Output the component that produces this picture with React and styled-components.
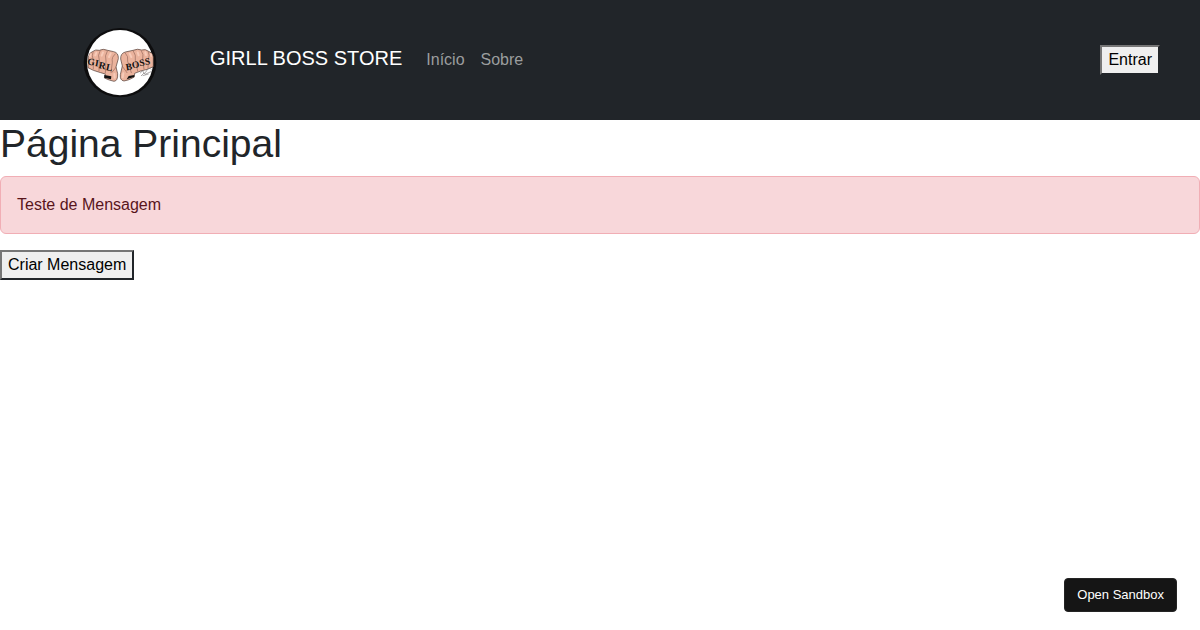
import React from 'react';
import styled, { createGlobalStyle } from 'styled-components';

const GlobalStyle = createGlobalStyle`
  *,
  *::before,
  *::after {
    box-sizing: border-box;
  }

  body {
    margin: 0;
    background: #fff;
    color: #212529;
    font-family: 'Helvetica Neue', Helvetica, 'Liberation Sans', Arial, sans-serif;
    font-size: 16px;
    line-height: 24px;
  }
`;

const StyledNavbar = styled.nav`
  min-height: 120px;
  display: flex;
  align-items: center;
  padding: 0 40px;
  background: #212529;
`;

const StyledLogoLink = styled.a`
  display: flex;
  padding: 5px 53px 0 43px;
`;

const StyledLogo = styled.svg`
  width: 74px;
  height: 70px;
`;

const StyledBrand = styled.a`
  margin-right: 16px;
  padding-bottom: 4px;
  color: #fff;
  font-size: 20px;
  line-height: 30px;
  text-decoration: none;
  white-space: nowrap;
`;

const StyledMenu = styled.ul`
  display: flex;
  flex-grow: 1;
  margin: 0;
  padding: 0;
  list-style: none;
`;

const StyledMenuLink = styled.a`
  display: block;
  padding: 8px;
  color: #9b9d9e;
  text-decoration: none;
`;

const StyledTitle = styled.h1`
  margin: 0 0 8px;
  font-size: 39px;
  font-weight: 500;
  line-height: 48px;
`;

const StyledAlert = styled.div`
  margin-bottom: 16px;
  padding: 16px;
  border: 1px solid #f1aeb5;
  border-radius: 6px;
  background: #f8d7da;
  color: #58151c;
`;

const StyledButton = styled.button`
  margin: 0;
  padding: 1px 6px;
  border: 2px solid;
  border-color: #767676 #212529 #212529 #767676;
  border-radius: 0;
  background: #efefef;
  color: #000;
  font-family: inherit;
  font-size: 16px;
  line-height: 24px;
  cursor: pointer;
`;

const StyledSandboxButton = styled.button`
  position: fixed;
  right: 23px;
  bottom: 18px;
  padding: 8px 12px;
  border: 1px solid #242424;
  border-radius: 4px;
  background: #151515;
  color: #fff;
  font-family: inherit;
  font-size: 13px;
  line-height: 16px;
  cursor: pointer;
`;

const letters = [
  { letter: 'G', x: 47, y: 135, angle: 8 },
  { letter: 'I', x: 64, y: 139, angle: 10 },
  { letter: 'R', x: 80, y: 146, angle: 12 },
  { letter: 'L', x: 101, y: 152, angle: 12 },
  { letter: 'B', x: 163, y: 150, angle: -10 },
  { letter: 'O', x: 183, y: 143, angle: -8 },
  { letter: 'S', x: 202, y: 138, angle: -8 },
  { letter: 'S', x: 219, y: 134, angle: -8 },
];

const Logo = () => {
  return (
    <StyledLogo viewBox="24 24 222 210" role="img" aria-label="Girl Boss">
      <ellipse cx="135" cy="128" rx="109" ry="104" fill="#0d0d0e" />
      <ellipse cx="135" cy="128" rx="99" ry="98" fill="#fff" />
      {/* fists */}
      <g fill="#ebb39d" stroke="#49352f" strokeWidth="2" strokeLinejoin="round">
        <path d="M39 143 L40 112 Q42 98 52 95 Q62 87 73 91 Q84 85 98 91 L116 95 Q131 98 130 116 L123 141 L128 161 Q129 183 117 184 Q103 181 88 174 L91 162 L77 158 L55 151Z" />
        <path d="M235 140 L235 111 Q232 97 221 94 Q211 86 200 90 Q188 85 174 91 L151 96 Q136 100 137 117 L142 138 L136 164 Q134 181 147 183 Q162 181 178 171 L179 160 L197 153 L217 148Z" />
      </g>
      {/* gaps between the fingers */}
      <g fill="none" stroke="#94675a" strokeWidth="2" strokeLinecap="round">
        <path d="M54 96 Q49 107 55 120 L55 147 M75 93 Q67 106 73 121 L72 152 M97 93 Q88 107 93 123 L91 159 M121 102 Q109 110 112 127 L108 157" />
        <path d="M220 95 Q225 106 220 118 L219 145 M199 92 Q207 103 203 118 L207 147 M175 93 Q184 105 181 121 L188 153 M151 99 Q161 109 158 124 L169 158" />
        <path d="M123 142 L111 157 M142 139 L156 158" />
      </g>
      <g fill="none" stroke="#f7cbb9" strokeWidth="6" strokeLinecap="round">
        <path d="M47 103 L45 109 M64 98 L61 106 M84 97 L80 107 M107 100 L102 111" />
        <path d="M228 103 L229 108 M211 97 L213 105 M188 97 L191 106 M164 101 L169 111 M118 162 L119 173 M145 160 L143 172" />
      </g>
      <path d="M88 165 L109 169 L108 178 L88 173Z M178 165 L161 168 L155 178 L177 171Z" fill="#111" />
      <g fill="#111" fontFamily="'Liberation Serif', serif" fontSize="29" fontWeight="700" textAnchor="middle">
        {letters.map(({ letter, x, y, angle }) => (
          <text key={`${letter}-${x}`} x={x} y={y} transform={`rotate(${angle} ${x} ${y})`}>
            {letter}
          </text>
        ))}
      </g>
      <path
        d="M196 160 Q202 147 205 156 T215 152 T229 149 M198 168 L207 159 L210 163 L228 155 M203 167 L221 162"
        fill="none"
        stroke="#858080"
        strokeWidth="2"
      />
    </StyledLogo>
  );
};

const App = () => {
  return (
    <>
      <GlobalStyle />
      <StyledNavbar>
        <StyledLogoLink href="#inicio">
          <Logo />
        </StyledLogoLink>
        <StyledBrand href="#inicio">GIRLL BOSS STORE</StyledBrand>
        <StyledMenu>
          <li>
            <StyledMenuLink href="#inicio">Início</StyledMenuLink>
          </li>
          <li>
            <StyledMenuLink href="#sobre">Sobre</StyledMenuLink>
          </li>
        </StyledMenu>
        <StyledButton type="button">Entrar</StyledButton>
      </StyledNavbar>
      <main>
        <StyledTitle>Página Principal</StyledTitle>
        <StyledAlert role="alert">Teste de Mensagem</StyledAlert>
        <StyledButton type="button">Criar Mensagem</StyledButton>
      </main>
      <StyledSandboxButton type="button">Open Sandbox</StyledSandboxButton>
    </>
  );
};

export default App;
